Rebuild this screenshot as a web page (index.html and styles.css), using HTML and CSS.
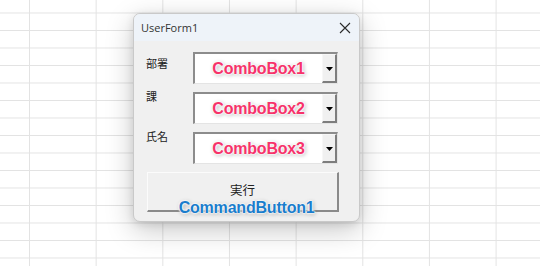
FILE: index.html
```html
<!DOCTYPE html>
<html lang="ja">
<head>
<meta charset="utf-8">
<title>UserForm1</title>
<link rel="stylesheet" href="styles.css">
</head>
<body>
<div class="sheet">
  <div class="dialog">
    <div class="titlebar">
      <span class="title">UserForm1</span>
      <svg class="close" width="12" height="12" viewBox="0 0 12 12"><path d="M1 1L11 11M11 1L1 11" stroke="#2b2b2b" stroke-width="1.1" fill="none"/></svg>
    </div>
    <div class="body">
      <div class="row">
        <span class="label l1">部署</span>
        <div class="combo"><span class="field"><span class="tag pink">ComboBox1</span></span><span class="drop"><svg width="7" height="4" viewBox="0 0 7 4"><path d="M0 0H7L3.5 4Z" fill="#000"/></svg></span></div>
      </div>
      <div class="row">
        <span class="label l2">課</span>
        <div class="combo"><span class="field"><span class="tag pink">ComboBox2</span></span><span class="drop"><svg width="7" height="4" viewBox="0 0 7 4"><path d="M0 0H7L3.5 4Z" fill="#000"/></svg></span></div>
      </div>
      <div class="row">
        <span class="label l3">氏名</span>
        <div class="combo"><span class="field"><span class="tag pink">ComboBox3</span></span><span class="drop"><svg width="7" height="4" viewBox="0 0 7 4"><path d="M0 0H7L3.5 4Z" fill="#000"/></svg></span></div>
      </div>
      <div class="button">
        <span class="btn-text">実行</span>
        <span class="tag blue btn-tag">CommandButton1</span>
      </div>
    </div>
  </div>
</div>
</body>
</html>
```
FILE: styles.css
```css
html, body { margin: 0; padding: 0; }
body { width: 540px; height: 266px; overflow: hidden; font-family: "Noto Sans", "Noto Sans CJK JP", sans-serif; }
.sheet {
  width: 540px; height: 266px; box-sizing: border-box;
  padding: 13px 0 0 133px;
  background-color: #ffffff;
  background-image:
    linear-gradient(to right, #e3e3e3 1px, transparent 1px),
    linear-gradient(to bottom, #e3e3e3 1px, transparent 1px);
  background-size: 66.67px 100%, 100% 17.5px;
  background-position: 29px 0, 0 12.5px;
}
.dialog {
  width: 227px; height: 209px; box-sizing: border-box;
  border: 1px solid #c9c9c9; border-radius: 7px; overflow: hidden;
  background: #f0f0f0;
  box-shadow: 0 8px 28px rgba(0,0,0,0.22), 0 2px 8px rgba(0,0,0,0.10);
  display: flex; flex-direction: column;
}
.titlebar {
  height: 27px; flex: none; background: #eef3f9;
  display: flex; align-items: center; justify-content: space-between;
  padding: 0 7px 0 7px;
}
.title { font-family: "Open Sans", "Noto Sans", sans-serif; font-size: 11px; color: #333; }
.close { display: block; margin-right: 1px; }
.body { display: flex; flex-direction: column; padding: 11px 0 0 12px; gap: 8px; }
.row { display: flex; align-items: flex-start; height: 32px; }
.label { width: 47px; font-family: "Noto Sans CJK JP", sans-serif; font-size: 11px; color: #222; line-height: 13px; }
.l1 { margin-top: 5px; }
.l2 { margin-top: -2px; }
.l3 { margin-top: -2px; }
.combo {
  width: 145px; height: 32px; box-sizing: border-box; display: flex;
  border-style: solid; border-width: 2px 1px 1px 2px;
  border-color: #8c8c8c #e4e4e4 #e4e4e4 #8c8c8c;
  background: #fff;
}
.field { flex: 1; display: flex; align-items: center; justify-content: center; }
.drop {
  width: 15px; box-sizing: border-box; background: #f0f0f0;
  border-style: solid; border-width: 1px 2px 2px 1px;
  border-color: #f7f7f7 #7d7d7d #7d7d7d #f7f7f7;
  display: flex; align-items: center; justify-content: center; padding-top: 2px;
}
.drop svg { display: block; }
.tag {
  font-family: "Liberation Sans", Arial, sans-serif; font-weight: bold; font-size: 16px; line-height: 18px;
  letter-spacing: -0.2px;
  text-shadow: 0 0 1px #fff, 0 0 2px #fff, 0 0 2px #fff, 0 0 3px #fff, 1px 1px 4px rgba(0,0,0,0.4);
}
.pink { color: #f6326a; }
.blue { color: #1a7dcc; }
.button {
  margin: 0 0 0 1px; width: 192px; height: 40px; box-sizing: border-box;
  border-style: solid; border-width: 1px 2px 2px 1px;
  border-color: #fbfbfb #8a8a8a #8a8a8a #fbfbfb;
  background: #f0f0f0;
  display: flex; flex-direction: column; align-items: center; position: relative;
}
.btn-text { font-family: "Noto Sans CJK JP", sans-serif; font-size: 12.5px; color: #222; margin-top: 9px; line-height: 16px; }
.btn-tag { position: absolute; top: 26px; left: 50%; transform: translateX(-47%); white-space: nowrap; }
```
